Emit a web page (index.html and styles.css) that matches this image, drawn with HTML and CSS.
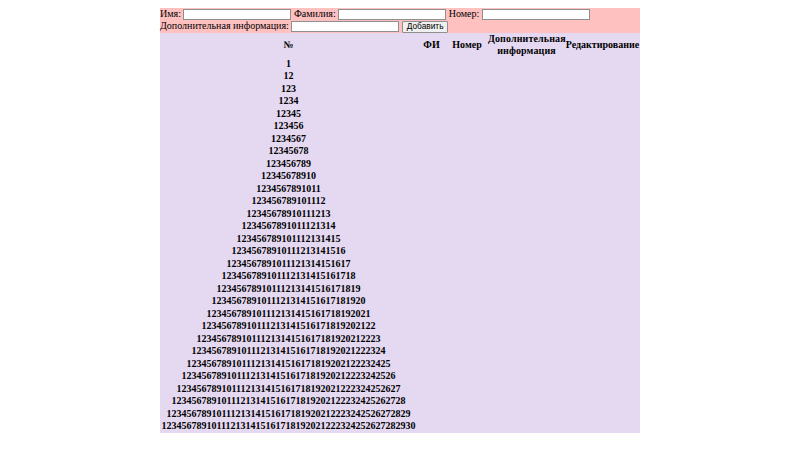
FILE: index.html
```html
<!DOCTYPE html>
<html>
<head>
<meta charset="utf-8">
<link rel="stylesheet" href="styles.css">
</head>
<body>
<div class="wrap">
  <form class="form">
    <label>Имя:</label> <input class="field" type="text"> <label>Фамилия:</label> <input class="field" type="text"> <label>Номер:</label> <input class="field" type="text"><br>
    <label>Дополнительная информация:</label> <input class="field" type="text"> <button class="btn" type="button">Добавить</button>
  </form>
  <table class="tbl">
    <thead>
      <tr><th class="c-no">№</th><th class="c-fi">ФИ</th><th class="c-num">Номер</th><th class="c-info">Дополнительная информация</th><th class="c-edit">Редактирование</th></tr>
    </thead>
    <tbody id="rows"></tbody>
  </table>
</div>
<script>
  var tb = document.getElementById('rows');
  var s = '';
  for (var i = 1; i <= 30; i++) {
    s += i;
    var tr = document.createElement('tr');
    var th = document.createElement('th');
    th.textContent = s;
    tr.appendChild(th);
    tb.appendChild(tr);
  }
</script>
</body>
</html>
```
FILE: styles.css
```css
body {
  margin: 8px 0 0 0;
  font-family: "Liberation Serif", "DejaVu Serif", serif;
  font-size: 10px;
}
.wrap {
  width: 480px;
  margin: 0 auto;
}
.form {
  background: #ffc0c0;
  line-height: 12px;
  margin: 0;
}
.field {
  box-sizing: border-box;
  width: 108px;
  height: 11px;
  padding: 0 1px;
  border: 1px solid #8f8f8f;
  font-size: 8px;
  vertical-align: middle;
  background: #fff;
}
.btn {
  box-sizing: border-box;
  height: 12px;
  padding: 0 4px;
  border: 1px solid #8f8f8f;
  border-radius: 1px;
  background: #efefef;
  font-family: "Liberation Sans", Arial, sans-serif;
  font-size: 8.3px;
  line-height: 9px;
  vertical-align: middle;
}
.tbl {
  width: 480px;
  table-layout: fixed;
  background: #e5d9f2;
  border-spacing: 0;
}
.tbl th {
  box-sizing: border-box;
  padding: 0;
  line-height: 12.5px;
  font-size: 10px;
}
.tbl .c-no { width: 257px; }
.tbl .c-fi { width: 29px; }
.tbl .c-num { width: 42px; }
.tbl .c-info { width: 77px; letter-spacing: 0.12px; }
.tbl .c-edit { width: 75px; }
```
